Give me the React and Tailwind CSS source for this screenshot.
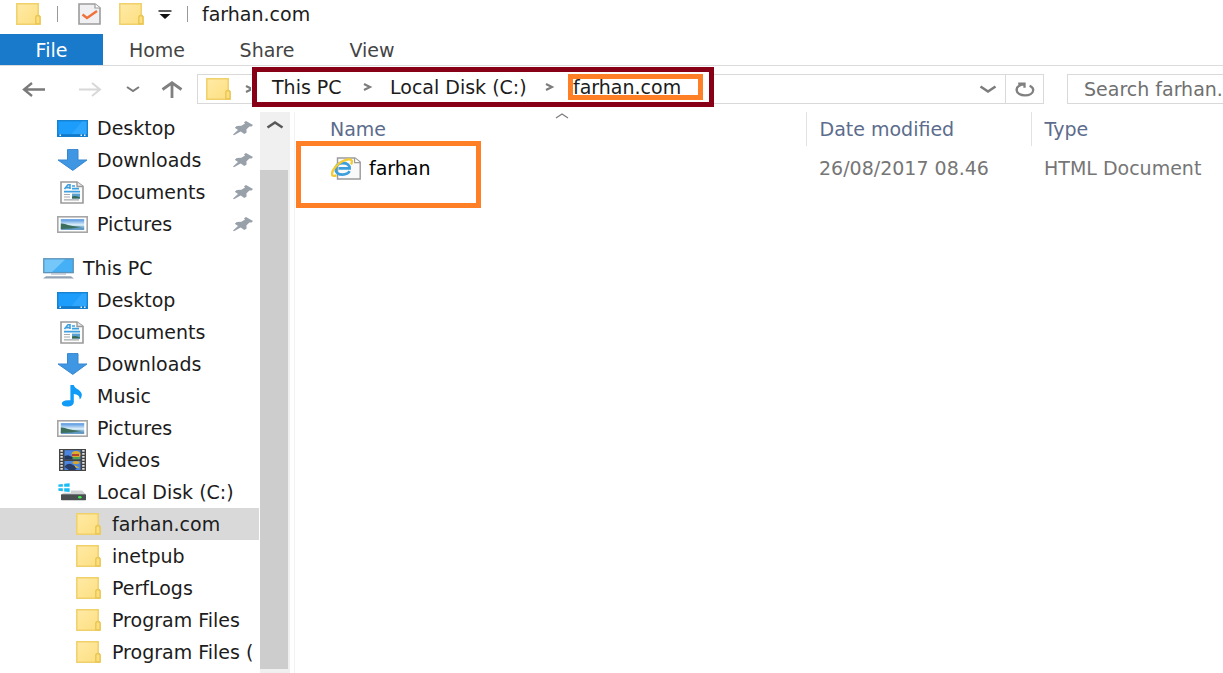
import React from "react";

function FolderIcon() {
  return (
    <svg width="25" height="22" viewBox="0 0 25 22" aria-hidden="true">
      <defs>
        <linearGradient id="folder" x1="0" y1="0" x2="1" y2="1">
          <stop offset="0" stopColor="#ffeaa6" />
          <stop offset="1" stopColor="#fddf80" />
        </linearGradient>
      </defs>
      <path d="M0.8 0.8H22.2V12L24 13.5V21.2H0.8Z" fill="url(#folder)" stroke="#f0d06a" strokeWidth="1.5" />
      <path d="M19.8 20.8V14.8Q19.8 12.5 21.8 12.5Q24 12.5 24 14.8V20.8Z" fill="#fddf80" stroke="#e9c655" strokeWidth="1.4" />
    </svg>
  );
}

function DesktopIcon() {
  return (
    <svg width="31" height="17" viewBox="0 0 31 17" aria-hidden="true">
      <rect x="0.7" y="0.7" width="29.6" height="15.6" fill="#1c9cfb" stroke="#1683d2" strokeWidth="1.4" />
      <path d="M14 14.5L25 1.4H29.5V14.5Z" fill="#3fb0ff" opacity="0.5" />
      <rect x="1" y="14.2" width="29" height="2.2" fill="#1278c8" />
      <path d="M2.5 15.2H4M23.5 15.2H25M27 15.2H28.5" stroke="#e6f5ff" strokeWidth="1.4" />
    </svg>
  );
}

function DownloadIcon() {
  return (
    <svg width="31" height="22" viewBox="0 0 31 22" aria-hidden="true">
      <path d="M10.5 0.6H21V11H30L15.8 21.4L1 11H10.5Z" fill="#3f97e3" stroke="#3787d0" strokeWidth="1" />
    </svg>
  );
}

function DocumentIcon() {
  return (
    <svg width="24" height="23" viewBox="0 0 24 23" aria-hidden="true">
      <path d="M1 1H17L23 5.5V22H1Z" fill="#fcfcfc" stroke="#9a9a9a" strokeWidth="1.6" />
      <path d="M17 1V5.5H23" fill="#e8e8e8" stroke="#9a9a9a" strokeWidth="1.4" />
      <path d="M4.5 8L8 3.8H10V8M6 6.6H10M12 5H15M12 7.6H19M4 10.6H20" stroke="#3d9fe0" strokeWidth="1.6" fill="none" />
      <path d="M4 13.5H10M4 16H10M4 18.8H19" stroke="#a5a9ad" strokeWidth="1.2" />
      <rect x="12" y="12.6" width="8" height="5" fill="#5aa0d0" />
      <path d="M12 15.5Q16 14 20 16.5V17.6H12Z" fill="#376852" />
    </svg>
  );
}

function PictureIcon() {
  return (
    <svg width="31" height="17" viewBox="0 0 31 17" aria-hidden="true">
      <defs>
        <linearGradient id="sky" x1="0" y1="0" x2="0" y2="1">
          <stop offset="0" stopColor="#4d91df" />
          <stop offset="0.55" stopColor="#e2f2fa" />
          <stop offset="0.7" stopColor="#8ab9d8" />
          <stop offset="1" stopColor="#3f80b5" />
        </linearGradient>
      </defs>
      <rect x="0.8" y="0.8" width="29.4" height="15.4" fill="#fff" stroke="#a6a6a6" strokeWidth="1.6" />
      <rect x="3.8" y="3.2" width="23.4" height="10.6" fill="url(#sky)" />
      <path d="M3.8 7.5Q7 7 11 9Q16 10 20 10.5L25 11L14 12.6L3.8 13Z" fill="#3b6f5c" />
    </svg>
  );
}

function PcIcon() {
  return (
    <svg width="31" height="21" viewBox="0 0 31 21" aria-hidden="true">
      <rect x="0.8" y="0.8" width="29.4" height="13.8" fill="#45b0f5" stroke="#5f92b8" strokeWidth="1.4" />
      <path d="M1.5 1.5H22L9 14H1.5Z" fill="#8ad2fb" opacity="0.7" />
      <path d="M8 16H23" stroke="#b0bfcc" strokeWidth="1.3" />
      <path d="M3 18.3H28L31 20.4H0Z" fill="#93a3b3" />
    </svg>
  );
}

function MusicIcon() {
  return (
    <svg width="22" height="22" viewBox="0 0 22 22" aria-hidden="true">
      <path d="M9.4 0H12.8C13.4 4 20.2 4.6 20.8 9.2C21 12 19.8 13.5 18.6 14.6C19 11 16.4 9.4 12.8 9V17C12.8 20 9.8 21.6 6.2 21.6C3 21.6 0.8 20.6 0.8 18.6C0.8 16 4 14.7 9.4 15.3Z" fill="#109bf8" />
    </svg>
  );
}

function VideoIcon() {
  return (
    <svg width="27" height="22" viewBox="0 0 27 22" aria-hidden="true">
      <rect width="27" height="22" fill="#444" />
      <path d="M2.6 1V22M24.4 1V22" stroke="#e4e4e4" strokeWidth="2.4" strokeDasharray="1.8 1.2" />
      <rect x="5.5" y="1.2" width="16" height="9" fill="#4a86e0" />
      <rect x="5.5" y="12" width="16" height="9" fill="#4a86e0" />
      <ellipse cx="17" cy="5.6" rx="4.4" ry="3.6" fill="#dcae2c" />
      <path d="M13 5H20V7H13Z" fill="#b5432f" />
      <path d="M13.5 8H20.5V10.2H13.5Z" fill="#4f9e4a" />
      <path d="M5.5 7L9 6.2L13.5 8V10.2H5.5Z" fill="#23365c" />
      <ellipse cx="17" cy="13.6" rx="3.4" ry="1.7" fill="#d9a62c" />
      <path d="M7 16Q11 13.5 15 16.5L19 18L16 21H10L5.5 18Z" fill="#263b66" />
      <path d="M15 16L20.5 18.5L17 19Z" fill="#d6bd43" />
    </svg>
  );
}

function DiskIcon() {
  return (
    <svg width="29" height="18" viewBox="0 0 29 18" aria-hidden="true">
      <path d="M0.4 1.4L4.8 0.9V3.8H0.4ZM6.2 0.8L11.6 0.2V3.8H6.2ZM0.4 5.2H4.8V8.2L0.4 7.8ZM6.2 5.2H11.6V9L6.2 8.4Z" fill="#18bdf3" />
      <path d="M13 7.5H24L28 11.5H3L6 9.8H13Z" fill="#cfd1d3" />
      <rect x="3" y="11.3" width="25" height="6" rx="0.8" fill="#4a4f52" />
      <ellipse cx="21.8" cy="14.2" rx="1.8" ry="1.3" fill="#3ef04b" />
    </svg>
  );
}

function PinIcon() {
  return (
    <svg width="20" height="15" viewBox="0 0 20 15" aria-hidden="true">
      <path d="M11 1.2L13 0L20 4L18.6 5.6L16.4 5.4L13.4 8.4L13.6 11.6L11.4 13L7.6 10.6L1 14.2L0 13.4L5 9L1.8 6.8L3.8 5L8.4 4.8L12 2.6Z" fill="#98a1aa" />
    </svg>
  );
}

function CheckPageIcon() {
  return (
    <svg width="23" height="22" viewBox="0 0 23 22" aria-hidden="true">
      <path d="M1 1H17L22 5V21H1Z" fill="#f0f0f2" stroke="#9c9c9c" strokeWidth="1.6" />
      <path d="M17 1V5H22" fill="#fff" stroke="#9c9c9c" strokeWidth="1.2" />
      <path d="M4.5 11.5L9 15L19 8" fill="none" stroke="#f0703a" strokeWidth="2.4" />
    </svg>
  );
}

function HtmlIcon() {
  return (
    <svg width="30" height="23" viewBox="0 0 30 23" aria-hidden="true">
      <path d="M6.5 1H24L29.2 5.2V22H6.5Z" fill="#f9f9f9" stroke="#9a9a9a" strokeWidth="1.4" />
      <path d="M23.6 1V5.6H29" fill="#fff" stroke="#9a9a9a" strokeWidth="1.2" />
      <path d="M18.6 14.2C17.4 16.4 14.8 17.6 11.6 17.6C7.4 17.6 4.6 15.4 4.6 11.9C4.6 8.4 7.6 6 11.8 6C16.2 6 18.8 8.2 18.6 11.4H7.5" fill="none" stroke="#3b9fdc" strokeWidth="2.8" />
      <path d="M5.5 18.4C2.5 19.6 0.8 18.8 1 16.6C1.4 12.8 5.6 7.6 11 4.6C15.4 2.2 20 1.4 20.8 3.6C21.2 4.8 20.8 6 20 7.4" fill="none" stroke="#f4cb30" strokeWidth="2.3" />
    </svg>
  );
}

function Chevron({ dir, color = "#7c7c7c", size = "large" }) {
  const paths = { down: "M1 2L7 6L13 2", up: "M1 6L7 2L13 6", right: "M3 1L9 4L3 7" };
  const big = size === "large";
  return (
    <svg width={big ? 18 : 14} height={big ? 10 : 8} viewBox="0 0 14 8" aria-hidden="true">
      <path d={paths[dir]} fill="none" stroke={color} strokeWidth={size === "thin" ? 1.2 : 2.1} />
    </svg>
  );
}

function ArrowLeft() {
  return (
    <svg width="24" height="15" viewBox="0 0 24 15" aria-hidden="true">
      <path d="M10 1L2 7.5L10 14M2 7.5H23" fill="none" stroke="#7a7a7a" strokeWidth="2.3" />
    </svg>
  );
}

function ArrowRight() {
  return (
    <svg width="24" height="15" viewBox="0 0 24 15" aria-hidden="true">
      <path d="M14 1L22 7.5L14 14M22 7.5H1" fill="none" stroke="#d8d8d8" strokeWidth="2" />
    </svg>
  );
}

function ArrowUp() {
  return (
    <svg width="22" height="17" viewBox="0 0 22 17" aria-hidden="true">
      <path d="M1.5 8.5L11 1.8L20.5 8.5M11 2V17" fill="none" stroke="#808080" strokeWidth="2.8" />
    </svg>
  );
}

function RefreshIcon() {
  return (
    <svg width="20" height="15" viewBox="0 0 20 15" aria-hidden="true">
      <path d="M9.5 5.8V1.6H3.2M9 1.8C3.5 3.2 1.4 5.6 1.6 8C2 11.4 5.6 13.4 10 13.4C14.4 13.4 18 11.4 18.2 8.2C18.3 6.4 17 4.8 14.6 3.8" fill="none" stroke="#808080" strokeWidth="2.3" />
    </svg>
  );
}

const quickAccess = [
  ["Desktop", DesktopIcon],
  ["Downloads", DownloadIcon],
  ["Documents", DocumentIcon],
  ["Pictures", PictureIcon],
];

const places = [
  ["Desktop", DesktopIcon],
  ["Documents", DocumentIcon],
  ["Downloads", DownloadIcon],
  ["Music", MusicIcon],
  ["Pictures", PictureIcon],
  ["Videos", VideoIcon],
  ["Local Disk (C:)", DiskIcon],
];

const folders = ["farhan.com", "inetpub", "PerfLogs", "Program Files", "Program Files ("];

const rowClass = "flex h-8 w-full items-center overflow-hidden text-left whitespace-nowrap";

function PlaceRow({ label, Icon, pinned }) {
  return (
    <li>
      <button type="button" className={rowClass + " gap-[9px] pr-1.5 pl-14"}>
        <span className="flex w-8 shrink-0 justify-center"><Icon /></span>
        <span className="flex-1">{label}</span>
        {pinned && <PinIcon />}
      </button>
    </li>
  );
}

function Sidebar() {
  return (
    <nav aria-label="Folders" className="w-[259px] shrink-0 overflow-hidden">
      <ul>
        {quickAccess.map(([label, Icon]) => (
          <PlaceRow key={label} label={label} Icon={Icon} pinned />
        ))}
      </ul>
      <ul className="mt-3">
        <li>
          <button type="button" className={rowClass + " gap-[9px] pl-[42px]"}>
            <span className="flex w-8 shrink-0 justify-center"><PcIcon /></span>
            <span>This PC</span>
          </button>
        </li>
        {places.map(([label, Icon]) => (
          <PlaceRow key={label} label={label} Icon={Icon} />
        ))}
        {folders.map((name, i) => (
          <li key={name}>
            <button type="button" className={rowClass + " gap-[11px] pl-[76px] " + (i === 0 ? "bg-[#d9d9d9]" : "")}>
              <span className="shrink-0"><FolderIcon /></span>
              <span>{name}</span>
            </button>
          </li>
        ))}
      </ul>
    </nav>
  );
}

function TitleBar() {
  return (
    <header className="flex h-[34px] items-center pb-1.5 pl-4">
      <FolderIcon />
      <span className="ml-4 h-4 w-px bg-[#999]" />
      <button type="button" aria-label="Properties" className="ml-5"><CheckPageIcon /></button>
      <button type="button" aria-label="New folder" className="ml-[18px]"><FolderIcon /></button>
      <button type="button" aria-label="Customize toolbar" className="ml-3.5">
        <svg width="14" height="9" viewBox="0 0 14 9" aria-hidden="true">
          <path d="M0.5 1H13.5" stroke="#333" strokeWidth="1.6" />
          <path d="M1.5 4H12.5L7 9Z" fill="#111" />
        </svg>
      </button>
      <span className="ml-[15px] h-4 w-px bg-[#999]" />
      <h1 className="ml-3.5">farhan.com</h1>
    </header>
  );
}

function AddressBar() {
  return (
    <div className="flex h-[46px] items-center">
      <button type="button" aria-label="Back" className="ml-[22px]"><ArrowLeft /></button>
      <button type="button" aria-label="Forward" className="ml-8"><ArrowRight /></button>
      <button type="button" aria-label="Recent locations" className="ml-6"><Chevron dir="down" size="small" /></button>
      <button type="button" aria-label="Up" className="ml-[21px]"><ArrowUp /></button>
      <div className="ml-3.5 flex h-[30px] min-w-0 flex-1 items-center border border-[#d9d9d9]">
        <span className="ml-2"><FolderIcon /></span>
        <span className="ml-3 w-2 overflow-hidden"><Chevron dir="right" size="small" /></span>
        <nav aria-label="Address" className="-mt-2 ml-px flex h-10 w-[462px] shrink-0 items-center self-start border-[5px] border-[#880015] bg-white pl-[15px] whitespace-nowrap">
          <a href="#pc" className="w-[89px]">This PC</a>
          <Chevron dir="right" size="small" />
          <a href="#c" className="ml-[15px] w-[153px]">Local Disk (C:)</a>
          <Chevron dir="right" size="small" />
          <a href="#farhan" className="ml-[11px] flex h-[26px] w-[135px] items-center border-[5px] border-[#ff7f27] leading-none">farhan.com</a>
        </nav>
        <button type="button" aria-label="Previous locations" className="mr-2 ml-auto"><Chevron dir="down" /></button>
        <button type="button" aria-label="Refresh" className="flex h-full w-[38px] items-center justify-center border-l border-[#d9d9d9]"><RefreshIcon /></button>
      </div>
      <input
        type="text"
        aria-label="Search farhan.com"
        placeholder="Search farhan."
        className="ml-[23px] h-[30px] w-[156px] shrink-0 border border-r-0 border-[#d9d9d9] pl-4 placeholder:text-[#707070] focus:outline-none"
      />
    </div>
  );
}

function FileList() {
  return (
    <main className="relative min-w-0 flex-1 overflow-hidden">
      <table className="w-full table-fixed text-left whitespace-nowrap">
        <colgroup>
          <col />
          <col className="w-[225px]" />
          <col className="w-[192px]" />
        </colgroup>
        <thead className="text-[#5c6c8c]">
          <tr className="h-[34px]">
            <th scope="col" className="relative pl-[35px] font-normal">
              Name
              <span className="absolute top-0 left-[51%] flex"><Chevron dir="up" size="thin" /></span>
            </th>
            <th scope="col" className="border-l border-[#e2e2e2] pl-[13px] font-normal">Date modified</th>
            <th scope="col" className="border-l border-[#e2e2e2] pl-[13px] font-normal">Type</th>
          </tr>
        </thead>
        <tbody>
          <tr className="h-11 text-[#767676]">
            <td className="pl-9 text-black">
              <span className="flex items-center gap-2"><HtmlIcon />farhan</span>
            </td>
            <td className="pl-[13px]">26/08/2017 08.46</td>
            <td className="pl-[13px]">HTML Document</td>
          </tr>
        </tbody>
      </table>
      <div className="pointer-events-none absolute top-[29px] left-px h-[67px] w-[185px] border-[5px] border-[#ff7f27]" />
    </main>
  );
}

export default function App() {
  return (
    <div className="flex min-h-screen flex-col overflow-hidden bg-white font-['DejaVu_Sans',sans-serif] text-[19px] leading-6 text-[#1c1c1c]">
      <TitleBar />
      <div className="flex h-8 items-stretch border-b border-[#dcdcdc] text-[#444]">
        <button type="button" className="w-[103px] bg-[#1979ca] text-white">File</button>
        <button type="button" className="w-[108px]">Home</button>
        <button type="button" className="w-[112px]">Share</button>
        <button type="button" className="w-[98px]">View</button>
      </div>
      <AddressBar />
      <div className="flex flex-1">
        <Sidebar />
        <div className="ml-px flex w-[30px] shrink-0 flex-col bg-[#f0f0f0] pb-1">
          <button type="button" aria-label="Scroll up" className="flex h-[58px] items-start justify-center pt-2"><Chevron dir="up" color="#585858" /></button>
          <div className="mr-0.5 flex-1 bg-[#cdcdcd]" />
        </div>
        <div className="ml-1 w-px shrink-0 bg-[#f2f2f2]" />
        <FileList />
      </div>
    </div>
  );
}
